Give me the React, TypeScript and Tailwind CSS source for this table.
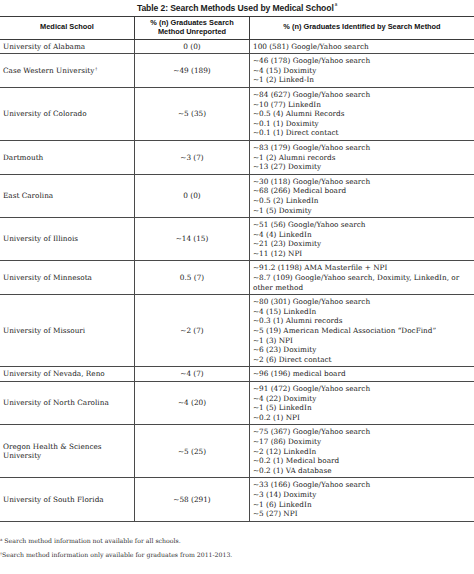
import React from "react";

type Row = { school: React.ReactNode; unrep: string; methods: string[] };

const rows: Row[] = [
  { school: "University of Alabama", unrep: "0 (0)", methods: ["100 (581) Google/Yahoo search"] },
  {
    school: (
      <>
        Case Western University
        <span className="text-[4px] relative top-[-3px] leading-none ml-[1px]">†</span>
      </>
    ),
    unrep: "~49 (189)",
    methods: ["~46 (178) Google/Yahoo search", "~4 (15) Doximity", "~1 (2) Linked-In"],
  },
  {
    school: "University of Colorado",
    unrep: "~5 (35)",
    methods: [
      "~84 (627) Google/Yahoo search",
      "~10 (77) LinkedIn",
      "~0.5 (4) Alumni Records",
      "~0.1 (1) Doximity",
      "~0.1 (1) Direct contact",
    ],
  },
  {
    school: "Dartmouth",
    unrep: "~3 (7)",
    methods: ["~83 (179) Google/Yahoo search", "~1 (2) Alumni records", "~13 (27) Doximity"],
  },
  {
    school: "East Carolina",
    unrep: "0 (0)",
    methods: ["~30 (118) Google/Yahoo search", "~68 (266) Medical board", "~0.5 (2) LinkedIn", "~1 (5) Doximity"],
  },
  {
    school: "University of Illinois",
    unrep: "~14 (15)",
    methods: ["~51 (56) Google/Yahoo search", "~4 (4) LinkedIn", "~21 (23) Doximity", "~11 (12) NPI"],
  },
  {
    school: "University of Minnesota",
    unrep: "0.5 (7)",
    methods: [
      "~91.2 (1198) AMA Masterfile + NPI",
      "~8.7 (109) Google/Yahoo search, Doximity, LinkedIn, or other method",
    ],
  },
  {
    school: "University of Missouri",
    unrep: "~2 (7)",
    methods: [
      "~80 (301) Google/Yahoo search",
      "~4 (15) LinkedIn",
      "~0.3 (1) Alumni records",
      "~5 (19) American Medical Association \u201CDocFind\u201D",
      "~1 (3) NPI",
      "~6 (23) Doximity",
      "~2 (6) Direct contact",
    ],
  },
  { school: "University of Nevada, Reno", unrep: "~4 (7)", methods: ["~96 (196) medical board"] },
  {
    school: "University of North Carolina",
    unrep: "~4 (20)",
    methods: ["~91 (472) Google/Yahoo search", "~4 (22) Doximity", "~1 (5) LinkedIn", "~0.2 (1) NPI"],
  },
  {
    school: "Oregon Health & Sciences University",
    unrep: "~5 (25)",
    methods: [
      "~75 (367) Google/Yahoo search",
      "~17 (86) Doximity",
      "~2 (12) LinkedIn",
      "~0.2 (1) Medical board",
      "~0.2 (1) VA database",
    ],
  },
  {
    school: "University of South Florida",
    unrep: "~58 (291)",
    methods: ["~33 (166) Google/Yahoo search", "~3 (14) Doximity", "~1 (6) LinkedIn", "~5 (27) NPI"],
  },
];

export default function App() {
  return (
    <div className="w-[474px] h-[574px] bg-white text-[#1a1a1a] overflow-hidden">
      <div
        className="h-[16px] flex items-center justify-center text-[8.6px] font-bold tracking-[-0.1px]"
        style={{ fontFamily: '"Liberation Sans", Arial, sans-serif' }}
      >
        Table 2: Search Methods Used by Medical School
        <span className="text-[4.5px] font-normal ml-[1px] relative top-[-3px]">a</span>
      </div>
      <div className="border-t-[1.5px] border-b-[1.5px] border-[#3a3a3a]">
        <div
          className="grid grid-cols-[135px_115px_1fr] font-bold text-[7.4px] leading-[8.8px] text-[#111]"
          style={{ fontFamily: '"Liberation Sans", Arial, sans-serif' }}
        >
          <div className="border-r border-[#3a3a3a] flex items-center justify-center py-[2px]">Medical School</div>
          <div className="border-r border-[#3a3a3a] flex items-center justify-center text-center py-[2px]">
            % (n) Graduates Search
            <br />
            Method Unreported
          </div>
          <div className="flex items-center justify-center py-[2px]">% (n) Graduates Identified by Search Method</div>
        </div>
      </div>
      <div style={{ fontFamily: '"DejaVu Serif", "Liberation Serif", serif' }} className="text-[7.3px] leading-[9.6px]">
        {rows.map((r, i) => (
          <div key={i} className="grid grid-cols-[135px_115px_1fr] border-b border-[#4a4a4a]">
            <div className="border-r border-[#4a4a4a] flex items-center pl-[3px] pr-[4px] py-[2px]">
              <div>{r.school}</div>
            </div>
            <div className="border-r border-[#4a4a4a] flex items-center justify-center py-[2px]">{r.unrep}</div>
            <div className="pl-[3px] pr-[8px] py-[2px]">
              {r.methods.map((m, j) => (
                <div key={j}>{m}</div>
              ))}
            </div>
          </div>
        ))}
      </div>
      <div
        className="mt-[12px] text-[6.2px] leading-[13px] text-[#333]"
        style={{ fontFamily: '"DejaVu Serif", "Liberation Serif", serif' }}
      >
        <div>
          <span className="text-[4px] relative top-[-2px]">a</span> Search method information not available for all schools.
        </div>
        <div>
          <span className="text-[4px] relative top-[-2px]">†</span>Search method information only available for graduates from 2011-2013.
        </div>
      </div>
    </div>
  );
}
